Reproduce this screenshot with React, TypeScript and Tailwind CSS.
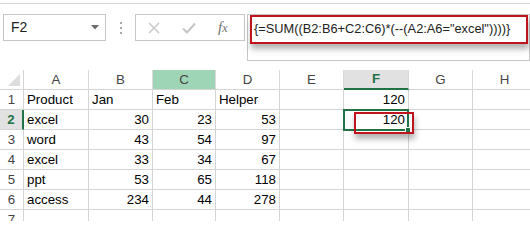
import React from 'react';

const COLS = ['A', 'B', 'C', 'D', 'E', 'F', 'G', 'H'];

const ROWS: (string | number)[][] = [
  ['Product', 'Jan', 'Feb', 'Helper', '', 120, '', ''],
  ['excel', 30, 23, 53, '', 120, '', ''],
  ['word', 43, 54, 97, '', '', '', ''],
  ['excel', 33, 34, 67, '', '', '', ''],
  ['ppt', 53, 65, 118, '', '', '', ''],
  ['access', 234, 44, 278, '', '', '', ''],
  ['', '', '', '', '', '', '', ''],
];

function FormulaBar() {
  return (
    <div className="flex items-start pt-[10px]">
      {/* Name box */}
      <div className="ml-[3px] w-[103px] h-[27px] border border-[#c6c6c6] flex items-center justify-between pl-[7px] pr-[6px]">
        <span className="text-[14px] text-[#222]">F2</span>
        <svg width="8" height="5" viewBox="0 0 8 5">
          <path d="M0 0h8L4 4.5z" fill="#6b6b6b" />
        </svg>
      </div>

      {/* Grip dots */}
      <div className="w-[29px] h-[27px] flex flex-col items-center justify-center gap-[3px]">
        <span className="w-[2px] h-[2px] bg-[#a8a8a8]" />
        <span className="w-[2px] h-[2px] bg-[#a8a8a8]" />
        <span className="w-[2px] h-[2px] bg-[#a8a8a8]" />
      </div>

      {/* Cancel / Enter / Function */}
      <div className="w-[110px] h-[27px] border border-[#c6c6c6] flex items-center">
        <svg className="ml-[12px]" width="12" height="12" viewBox="0 0 12 12">
          <path d="M1 1l10 10M11 1L1 11" stroke="#c4c4c4" strokeWidth="1.4" />
        </svg>
        <svg className="ml-[22px]" width="14" height="12" viewBox="0 0 14 12">
          <path d="M1 6.5l4 4L13 1.5" stroke="#c4c4c4" strokeWidth="2" fill="none" />
        </svg>
        <span className="ml-[22px] font-['Liberation_Serif',serif] italic text-[15px] leading-none text-[#6e6e6e]">
          f<span className="text-[12px]">x</span>
        </span>
      </div>

      {/* Formula input */}
      <div className="ml-[2px] flex-1 h-[47px] border border-[#c6c6c6] pl-[2px] pt-0">
        <div className="h-[29px] w-[278px] border-[2.5px] border-[#c0141c] shadow-[1px_5px_6px_rgba(0,0,0,0.3)] flex items-center pl-[2px] pb-[1px]">
          <span className="text-[12.8px] text-[#222] whitespace-nowrap">
            {'{=SUM((B2:B6+C2:C6)*(--(A2:A6="excel"))))}'}
          </span>
        </div>
      </div>
    </div>
  );
}

function Grid() {
  return (
    <div className="relative mt-[9px] grid grid-cols-[24px_65px_64px_63px_64px_64px_65px_64px_64px] w-[537px]">
      {/* corner */}
      <div className="h-[20px] border-r border-b border-[#d4d4d4] flex items-end justify-end pr-[3px] pb-[3px]">
        <svg width="12" height="12" viewBox="0 0 12 12">
          <path d="M12 0v12H0z" fill="#dcdcdc" />
        </svg>
      </div>
      {COLS.map((c) => {
        const cls =
          c === 'F'
            ? 'bg-[#e1e1e1] text-[#217346] font-bold border-b-2 border-b-[#217346]'
            : c === 'C'
              ? 'bg-[#9fd5b7] text-[#444] border-b border-b-[#d4d4d4]'
              : 'text-[#444] border-b border-b-[#d4d4d4]';
        return (
          <div
            key={c}
            className={`h-[20px] border-r border-r-[#dadada] flex items-center justify-center text-[13.3px] ${cls}`}
          >
            {c}
          </div>
        );
      })}

      {ROWS.map((row, r) => (
        <React.Fragment key={r}>
          <div
            className={`h-[20px] border-b border-[#d4d4d4] flex items-center justify-center text-[13.3px] ${
              r === 1
                ? 'bg-[#e1e1e1] text-[#217346] font-bold border-r-2 border-r-[#217346]'
                : 'text-[#444] border-r'
            }`}
          >
            {r + 1}
          </div>
          {row.map((v, i) => (
            <div
              key={i}
              className={`h-[20px] border-r border-b border-[#d4d4d4] flex items-center text-[13.3px] text-black whitespace-nowrap overflow-hidden ${
                typeof v === 'number' ? 'justify-end pr-[3px]' : 'pl-[3px]'
              }`}
            >
              {v}
            </div>
          ))}
        </React.Fragment>
      ))}

      {/* active cell F2 */}
      <div className="absolute left-[343px] top-[39px] w-[66px] h-[22px] border-2 border-[#217346]" />
      <div className="absolute left-[405px] top-[57px] w-[6px] h-[6px] bg-[#217346] border border-white" />
      {/* annotation box */}
      <div className="absolute left-[354px] top-[42px] w-[60px] h-[22px] border-2 border-[#c0141c] shadow-[1px_5px_6px_rgba(0,0,0,0.3)]" />
    </div>
  );
}

export default function App() {
  return (
    <div className="w-[530px] h-[221px] overflow-hidden bg-white font-['Liberation_Sans',Arial,sans-serif]">
      <div className="h-[4px] border-b border-[#d6d6d6]" />
      <FormulaBar />
      <Grid />
    </div>
  );
}
